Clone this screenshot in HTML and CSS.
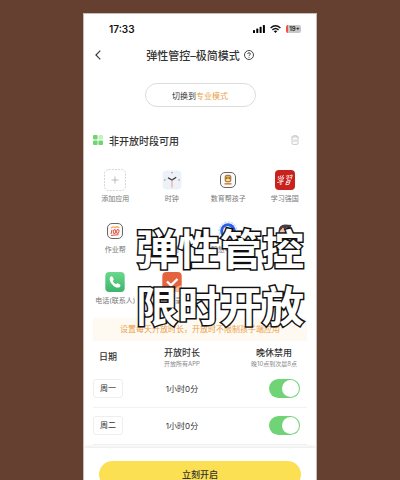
FILE: index.html
```html
<!DOCTYPE html>
<html lang="zh-CN">
<head>
  <meta charset="UTF-8">
  <meta name="viewport" content="width=device-width, initial-scale=1.0">
  <title>弹性管控</title>
  <link rel="stylesheet" href="styles.css">
</head>
<body>
  <div class="phone">
    <div class="status-bar">
      <span class="clock">17:33</span>
      <div class="status-icons">
        <svg width="12" height="8" viewBox="0 0 12 8">
          <rect x="0" y="5" width="2" height="3" rx="0.6"/>
          <rect x="3.3" y="3.6" width="2" height="4.4" rx="0.6"/>
          <rect x="6.6" y="1.8" width="2" height="6.2" rx="0.6"/>
          <rect x="9.9" y="0" width="2" height="8" rx="0.6"/>
        </svg>
        <svg width="11" height="8" viewBox="0 0 11 8">
          <path d="M0.6 3Q5.5-1.4 10.4 3M2.4 4.9Q5.5 2.2 8.6 4.9" fill="none" stroke="#111" stroke-width="1.4"/>
          <path d="M3.7 6.1Q5.5 4.8 7.3 6.1L5.5 8Z"/>
        </svg>
        <span class="battery">19+</span>
      </div>
    </div>

    <header class="title-bar">
      <button class="icon-btn back-btn" aria-label="返回">
        <svg width="6" height="10" viewBox="0 0 6 10"><path d="M5.3 0.6L0.9 5L5.3 9.4" fill="none" stroke="#333" stroke-width="1.1"/></svg>
      </button>
      <h1>弹性管控–极简模式</h1>
      <button class="icon-btn" aria-label="帮助">
        <svg width="10" height="10" viewBox="0 0 10 10" fill="none" stroke="#333">
          <circle cx="5" cy="5" r="4.5" stroke-width="0.9"/>
          <path d="M3.6 4.1Q3.7 2.8 5 2.8T6.4 4Q6.4 4.6 5.7 5T5 6.1M5 6.9V7.7" stroke-width="0.9"/>
        </svg>
      </button>
    </header>

    <main>
      <button class="mode-btn">切换到<span>专业模式</span></button>

      <div class="section-head">
        <svg width="10" height="10" viewBox="0 0 10 10" fill="#6fd66f">
          <rect width="4.6" height="4.6" rx="1"/>
          <rect x="5.4" width="4.6" height="4.6" rx="1" fill="#c4f0c0"/>
          <rect y="5.4" width="4.6" height="4.6" rx="1"/>
          <rect x="5.4" y="5.4" width="4.6" height="4.6" rx="1"/>
        </svg>
        <h2>非开放时段可用</h2>
        <button class="icon-btn" aria-label="删除">
          <svg width="8" height="10" viewBox="0 0 8 10" fill="none" stroke="#bbb" stroke-width="0.8">
            <path d="M0.3 2H7.7M2.3 2V0.7H5.7V2M1 2V8.2Q1 9.4 2.2 9.4H5.8Q7 9.4 7 8.2V2M3 4.2V7.2M5 4.2V7.2"/>
          </svg>
        </button>
      </div>

      <div class="app-area">
        <div class="app-grid">
          <div class="app">
            <svg width="22" height="22" viewBox="0 0 22 22" fill="none">
              <rect x="0.5" y="0.5" width="21" height="21" rx="4" stroke="#ccc" stroke-width="0.8" stroke-dasharray="2 1.2"/>
              <path d="M11 7.5V14.5M7.5 11H14.5" stroke="#aaa" stroke-width="0.8"/>
            </svg>
            <span>添加应用</span>
          </div>
          <div class="app">
            <svg width="22" height="22" viewBox="0 0 22 22" fill="none">
              <rect x="1.5" y="1.5" width="19" height="19" rx="4" fill="#edf1f8"/>
              <path d="M11 3V4.3M3.2 11H4.5M17.5 11H18.8" stroke="#777" stroke-width="1"/>
              <path d="M7 8.7L11 11L15.2 8.3" stroke="#333" stroke-width="1.2"/>
              <path d="M11 10.5V18.5" stroke="#e58a86" stroke-width="0.8"/>
            </svg>
            <span>时钟</span>
          </div>
          <div class="app">
            <svg width="22" height="22" viewBox="0 0 22 22" fill="none">
              <rect x="3.5" y="3.5" width="15" height="15" rx="4.5" fill="#fafafa" stroke="#666"/>
              <rect x="8.2" y="6.3" width="5.6" height="6.5" rx="1.5" fill="#f0b43c" stroke="#705038" stroke-width="0.8"/>
              <path d="M9 9H10.4M11.6 9H13" stroke="#453123"/>
              <path d="M9.5 11H12.5" stroke="#fff" stroke-width="1.2"/>
              <path d="M7.5 14.8H14.5" stroke="#e88239" stroke-width="1.6"/>
            </svg>
            <span>数育帮孩子</span>
          </div>
          <div class="app">
            <svg width="22" height="22" viewBox="0 0 22 22" fill="none">
              <rect x="1" y="1" width="20" height="20" rx="4" fill="#c9211d"/>
              <path d="M4 9L5 7M6.3 8.5L7 6.4M8 8.6L9.5 6M4 11L5 9.4L10 8.8L8.7 10.5M5 11.4L8.5 10.8L6.8 12.7L7.2 15.5L5.6 15M3.2 13.5L9.8 12.2M12 7.2L14.5 6.5L13.7 11.2M12.2 9.4L13.7 9M15.3 6.8L18.2 6L17.2 10.2M15.4 8.8L17 8.2M13 12L11.7 15.6M12.8 12L16.3 11.2L15 15.3L11.8 15.7M12.5 13.6L15.4 13" stroke="#fff" stroke-width="0.8"/>
            </svg>
            <span>学习强国</span>
          </div>
          <div class="app">
            <svg width="22" height="22" viewBox="0 0 22 22" fill="none">
              <rect x="3.5" y="3.5" width="15" height="15" rx="4.5" fill="#fafafa" stroke="#666"/>
              <path d="M7 8L9 6.8L11 7.5L13 6.7L15.5 7.7" stroke="#f0a847" stroke-width="1.2"/>
              <path d="M8 9.8L7 14M7 15.4L14.5 14.7" stroke="#e14b3e"/>
              <ellipse cx="10.5" cy="11.7" rx="1.2" ry="1.9" transform="rotate(12 10.5 11.7)" stroke="#e14b3e"/>
              <ellipse cx="13.8" cy="11.5" rx="1.2" ry="1.9" transform="rotate(12 13.8 11.5)" stroke="#e14b3e"/>
            </svg>
            <span>作业帮</span>
          </div>
          <div class="app">
            <svg width="22" height="22" viewBox="0 0 22 22"></svg>
            <span>邮同</span>
          </div>
          <div class="app">
            <svg width="22" height="22" viewBox="0 0 22 22" fill="none">
              <circle cx="11" cy="11" r="9" stroke="#a9c4fa" stroke-dasharray="2 1.5"/>
              <circle cx="11" cy="11" r="7.8" fill="#2860e8"/>
              <path d="M14.3 9.5A3.8 3.8 0 1 0 14 13L11.5 11.5" stroke="#fff" stroke-width="1.8"/>
            </svg>
            <span>智慧中小学</span>
          </div>
          <div class="app">
            <svg width="22" height="22" viewBox="0 0 22 22">
              <path d="M4.5 11Q5 4.5 11 4.5L17.5 5L16 8Q18 10 17 15H5Z" fill="#443c3e"/>
              <path d="M6 11L9 7.5L10.5 9L12.5 7.5L14.5 10V15Q10 18 6 15Z" fill="#f0c3b2"/>
            </svg>
          </div>
          <div class="app">
            <svg width="22" height="22" viewBox="0 0 22 22">
              <defs>
                <linearGradient id="call" x2="0" y2="1"><stop stop-color="#6bd98e"/><stop offset="1" stop-color="#3cb46a"/></linearGradient>
              </defs>
              <rect x="1.3" y="1" width="19.4" height="20" rx="4" fill="url(#call)"/>
              <path d="M6 6.2Q7.6 4.4 8.8 6.2L9.7 8Q10 9.1 8.8 10Q9.8 12.2 12 13.2Q13 11.8 14.2 12.4L16 13.5Q17.4 14.8 15.6 16.2C11.8 18.4 4 11.2 6 6.2Z" fill="#fff"/>
            </svg>
            <span>电话(联系人)</span>
          </div>
          <div class="app">
            <svg width="22" height="22" viewBox="0 0 22 22">
              <rect x="1.3" y="1" width="19.4" height="20" rx="4" fill="#e56440"/>
              <path d="M12 21Q14 16 20.7 14V17Q20.7 21 16.7 21Z" fill="#f4bd9f"/>
              <path d="M6 10.5L10 14.3L16.5 8" fill="none" stroke="#fff" stroke-width="2.4"/>
            </svg>
            <span>备忘录</span>
          </div>
        </div>
        <div class="caption">弹性管控<br>限时开放</div>
      </div>

      <p class="notice">设置每天开放时长，开放时不限制孩子端应用</p>

      <table class="schedule">
        <thead>
          <tr>
            <th>日期</th>
            <th>开放时长<small>开放所有APP</small></th>
            <th>晚休禁用<small>晚10点到次晨8点</small></th>
          </tr>
        </thead>
        <tbody>
          <tr>
            <td><span class="day">周一</span></td>
            <td>1小时0分</td>
            <td><input type="checkbox" class="switch" aria-label="周一晚休禁用" checked></td>
          </tr>
          <tr>
            <td><span class="day">周二</span></td>
            <td>1小时0分</td>
            <td><input type="checkbox" class="switch" aria-label="周二晚休禁用" checked></td>
          </tr>
        </tbody>
      </table>
    </main>

    <footer>
      <button class="start-btn">立刻开启</button>
    </footer>
  </div>
</body>
</html>
```
FILE: styles.css
```css
* {
  margin: 0;
  padding: 0;
  box-sizing: border-box;
}

body {
  font-family: 'Inter', 'Noto Sans CJK SC', sans-serif;
  background: #654031;
  color: #333;
  height: 100vh;
  padding: 13px 0 0;
  overflow: hidden;
}

button {
  font-family: inherit;
  color: inherit;
  border: none;
  background: none;
  cursor: pointer;
}

svg {
  display: block;
}

.phone {
  width: 58.5%;
  height: 100%;
  margin: 0 auto;
  background: white;
  border: 1px solid #c9bcb5;
  border-bottom: none;
  overflow: hidden;
}

.status-bar {
  display: flex;
  justify-content: space-between;
  align-items: center;
  height: 30px;
  padding: 0 15px 0 25px;
}

.clock {
  font-size: 10px;
  font-weight: 600;
  color: #111;
}

.status-icons {
  display: flex;
  align-items: center;
  gap: 5px;
}

.battery {
  width: 15px;
  height: 8px;
  border-left: 2px solid #f4504a;
  border-radius: 2px;
  background: #c8c8c8;
  font-size: 6px;
  font-weight: 700;
  line-height: 8px;
  text-align: center;
}

.title-bar {
  display: flex;
  justify-content: center;
  align-items: center;
  gap: 4px;
  height: 22px;
  padding: 0 10px;
  position: relative;
}

.back-btn {
  position: absolute;
  left: 11px;
}

h1 {
  font-size: 11px;
  font-weight: 500;
}

.mode-btn {
  display: block;
  width: 111px;
  height: 24px;
  margin: 17px auto 0;
  border: 1px solid #ddd;
  border-radius: 12px;
  font-size: 8px;
}

.mode-btn span {
  color: #eba14c;
}

.section-head {
  display: flex;
  align-items: center;
  gap: 6px;
  height: 16px;
  margin: 25px 17px 0 9px;
}

.section-head h2 {
  flex: 1;
  font-size: 10px;
  font-weight: 500;
}

.app-area {
  position: relative;
}

.app-grid {
  display: grid;
  grid-template-columns: repeat(4, 1fr);
  grid-auto-rows: 51px;
  padding: 21px 3px 0;
}

.app {
  display: flex;
  flex-direction: column;
  align-items: center;
  gap: 2px;
  font-size: 7px;
  line-height: 12px;
  color: #777;
  white-space: nowrap;
}

/* big title lying over the apps */
.caption {
  position: absolute;
  top: 73px;
  right: 12px;
  font-size: 42px;
  font-weight: 700;
  line-height: 57px;
  color: white;
  white-space: nowrap;
  -webkit-text-stroke: 3px #111;
  paint-order: stroke fill;
}

.notice {
  height: 23px;
  margin: -4px 9px 0;
  background: #fffaf1;
  color: #e8a04d;
  font-size: 8px;
  line-height: 23px;
  text-align: center;
  white-space: nowrap;
}

.schedule {
  width: calc(100% - 18px);
  margin: 0 9px;
  border-collapse: collapse;
  table-layout: fixed;
  font-size: 8px;
  text-align: center;
}

.schedule th {
  height: 29px;
  padding-top: 3px;
  font-size: 9px;
  font-weight: 500;
  line-height: 12px;
}

.schedule small {
  display: block;
  font-size: 6px;
  font-weight: 400;
  line-height: 9px;
  color: #888;
}

.schedule th:first-child,
.schedule td:first-child {
  width: 30px;
}

.schedule th:last-child {
  width: 66px;
}

.schedule td {
  height: 37px;
  border-bottom: 1px solid #f2f2f2;
}

.day {
  display: block;
  height: 19px;
  border: 1px solid #eee;
  border-radius: 3px;
  line-height: 17px;
}

.switch {
  appearance: none;
  display: block;
  width: 31px;
  height: 19px;
  margin: 0 7px 0 auto;
  padding: 1px;
  border-radius: 10px;
  background: #ccc;
  cursor: pointer;
}

.switch::before {
  content: '';
  display: block;
  width: 17px;
  height: 17px;
  border-radius: 50%;
  background: white;
}

.switch:checked {
  background: #70d375;
}

.switch:checked::before {
  margin-left: auto;
}

footer {
  height: 50px;
  margin-top: 3px;
  padding: 13px 15px 0;
  box-shadow: 0 -1px 4px rgba(0,0,0,0.1);
}

.start-btn {
  width: 100%;
  height: 27px;
  border-radius: 14px;
  background: #fae052;
  font-size: 9px;
  font-weight: 500;
}
```
